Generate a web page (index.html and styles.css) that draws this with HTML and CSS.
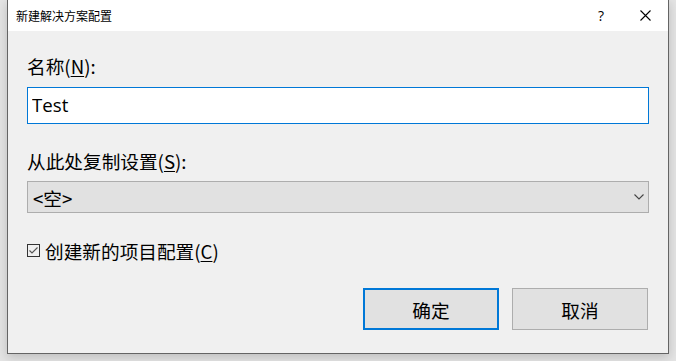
FILE: index.html
```html
<!DOCTYPE html>
<html lang="zh-CN">
<head>
    <meta charset="UTF-8">
    <title>新建解决方案配置</title>
    <link rel="stylesheet" href="styles.css">
</head>
<body>
    <div class="dialog">
        <div class="titlebar">
            <div class="title">新建解决方案配置</div>
            <div class="title-buttons">
                <span class="help">?</span>
                <svg class="close" width="11" height="11" viewBox="0 0 11 11">
                    <path d="M0.5 0.5 L10.5 10.5 M10.5 0.5 L0.5 10.5" stroke="#000" stroke-width="1.1" fill="none"/>
                </svg>
            </div>
        </div>
        <div class="content">
            <label class="label" for="configName">名称(<u>N</u>):</label>
            <input class="text-input" id="configName" type="text" value="Test">

            <label class="label copy-label">从此处复制设置(<u>S</u>):</label>
            <div class="select">
                <span>&lt;空&gt;</span>
                <svg class="chevron" width="10" height="6" viewBox="0 0 10 6">
                    <path d="M0.5 0.5 L5 5 L9.5 0.5" stroke="#444" stroke-width="1.1" fill="none"/>
                </svg>
            </div>

            <div class="check-row">
                <svg class="checkbox" width="13" height="13" viewBox="0 0 13 13">
                    <rect x="0.5" y="0.5" width="12" height="12" fill="none" stroke="#333"/>
                    <path d="M2.5 6.5 L5 9 L10.5 3.5" stroke="#555" stroke-width="1.1" fill="none"/>
                </svg>
                <span>创建新的项目配置(<u>C</u>)</span>
            </div>

            <div class="buttons">
                <button class="button primary">确定</button>
                <button class="button">取消</button>
            </div>
        </div>
    </div>
</body>
</html>
```

FILE: styles.css
```css
body {
    margin: 0;
    background-color: #e4e4e4;
    font-family: "Noto Sans CJK SC", "Noto Sans", sans-serif;
    height: 361px;
    overflow: hidden;
}

.dialog {
    margin-left: 7px;
    width: 660px;
    border: 1px solid #646464;
    border-top: none;
    background-color: #f0f0f0;
    box-shadow: 0 3px 10px rgba(0, 0, 0, 0.18);
}

.titlebar {
    height: 31px;
    background-color: #fff;
    display: flex;
    align-items: center;
    justify-content: space-between;
}

.title {
    padding-left: 8px;
    font-size: 12px;
    color: #000;
}

.title-buttons {
    display: flex;
    align-items: center;
    padding-right: 17px;
}

.help {
    font-family: "Open Sans", sans-serif;
    font-size: 14px;
    margin-right: 36px;
}

.content {
    display: flex;
    flex-direction: column;
    padding: 23px 19px 23px 19px;
    font-size: 18.67px;
}

.label {
    line-height: 24px;
    height: 24px;
}

.text-input {
    margin-top: 9px;
    height: 37px;
    box-sizing: border-box;
    border: 1px solid #0078d7;
    background: #fff;
    padding: 0 0 3px 4px;
    font-family: "Open Sans", "Noto Sans CJK SC", sans-serif;
    font-size: 18.67px;
    color: #000;
    outline: none;
}

.copy-label {
    margin-top: 25px;
}

.select {
    margin-top: 8px;
    height: 32px;
    box-sizing: border-box;
    border: 1px solid #adadad;
    background-color: #e1e1e1;
    display: flex;
    align-items: center;
    justify-content: space-between;
    padding: 0 4px 0 5px;
}

.check-row {
    margin-top: 25px;
    height: 24px;
    display: flex;
    align-items: center;
    gap: 5px;
}

.buttons {
    margin-top: 26px;
    display: flex;
    justify-content: flex-end;
    gap: 13px;
    padding-right: 1px;
}

.button {
    width: 136px;
    height: 42px;
    box-sizing: border-box;
    border: 1px solid #adadad;
    background-color: #e1e1e1;
    font-family: "Noto Sans CJK SC", sans-serif;
    font-size: 18.67px;
    color: #000;
    padding: 0;
}

.button.primary {
    border: 2px solid #0078d7;
}

u {
    text-decoration-thickness: 1px;
    text-underline-offset: 2px;
}
```
